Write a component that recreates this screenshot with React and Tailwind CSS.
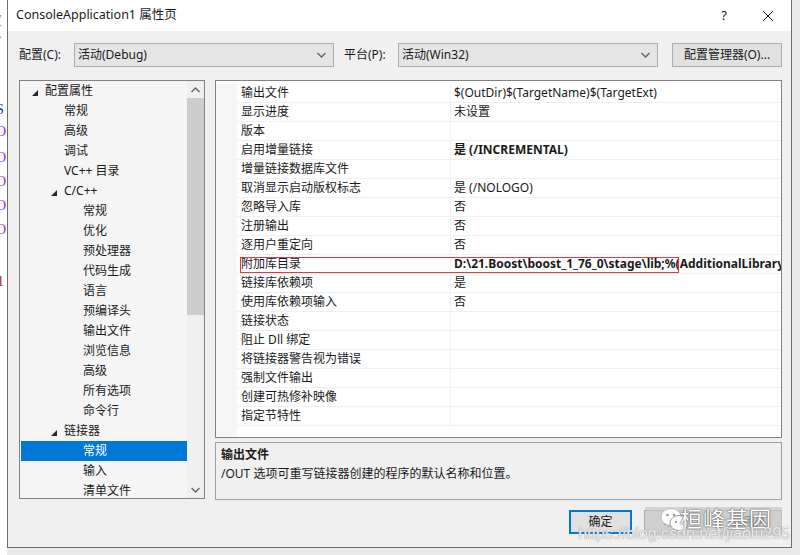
import React from "react";

const font = "font-['Noto_Sans','Noto_Sans_CJK_SC',sans-serif]";

const treeItems = [
  { level: 0, label: "配置属性", open: true },
  { level: 1, label: "常规" },
  { level: 1, label: "高级" },
  { level: 1, label: "调试" },
  { level: 1, label: "VC++ 目录" },
  { level: 1, label: "C/C++", open: true },
  { level: 2, label: "常规" },
  { level: 2, label: "优化" },
  { level: 2, label: "预处理器" },
  { level: 2, label: "代码生成" },
  { level: 2, label: "语言" },
  { level: 2, label: "预编译头" },
  { level: 2, label: "输出文件" },
  { level: 2, label: "浏览信息" },
  { level: 2, label: "高级" },
  { level: 2, label: "所有选项" },
  { level: 2, label: "命令行" },
  { level: 1, label: "链接器", open: true },
  { level: 2, label: "常规", selected: true },
  { level: 2, label: "输入" },
  { level: 2, label: "清单文件" },
];

const props = [
  ["输出文件", "$(OutDir)$(TargetName)$(TargetExt)"],
  ["显示进度", "未设置"],
  ["版本", ""],
  ["启用增量链接", "是 (/INCREMENTAL)", true],
  ["增量链接数据库文件", ""],
  ["取消显示启动版权标志", "是 (/NOLOGO)"],
  ["忽略导入库", "否"],
  ["注册输出", "否"],
  ["逐用户重定向", "否"],
  ["附加库目录", "D:\\21.Boost\\boost_1_76_0\\stage\\lib;%(AdditionalLibraryDirectories)", true, true],
  ["链接库依赖项", "是"],
  ["使用库依赖项输入", "否"],
  ["链接状态", ""],
  ["阻止 Dll 绑定", ""],
  ["将链接器警告视为错误", ""],
  ["强制文件输出", ""],
  ["创建可热修补映像", ""],
  ["指定节特性", ""],
];

const Chevron = ({ up }) => (
  <svg width="9" height="6" viewBox="0 0 9 6" className="shrink-0">
    <polyline
      points={up ? "0.5,5 4.5,1 8.5,5" : "0.5,1 4.5,5 8.5,1"}
      fill="none"
      stroke="#606060"
      strokeWidth="1.3"
    />
  </svg>
);

const Triangle = () => (
  <svg width="6" height="6" viewBox="0 0 6 6" className="mt-[3px]">
    <polygon points="6,0 6,6 0,6" fill="#262626" />
  </svg>
);

const Combo = ({ value }) => (
  <div className="flex h-[24px] w-[260px] items-center justify-between border border-[#adadad] bg-[#e5e5e5] pl-[3px] pr-[7px]">
    <span>{value}</span>
    <Chevron />
  </div>
);

const Button = ({ children, primary, className = "" }) => (
  <div
    className={`flex h-[24px] items-center justify-center bg-[#e1e1e1] ${
      primary ? "border-2 border-[#0078d7]" : "border border-[#adadad]"
    } ${className}`}
  >
    {children}
  </div>
);

export default function App() {
  return (
    <div className={`flex h-[555px] w-[800px] overflow-hidden bg-[#e8e8e8] text-[12px] text-[#1a1a1a] ${font}`}>
      {/* bit of the code editor behind the dialog */}
      <div className="relative h-[555px] w-[7px] shrink-0 overflow-hidden bg-white font-['Liberation_Serif',serif] text-[14px] leading-none">
        <span className="absolute left-[-3px] top-[14px] text-[#a31515]">/</span>
        <span className="absolute left-[-3px] top-[24px] text-[#a31515]">(</span>
        <span className="absolute left-[-4px] top-[103px] text-[#1a1aff]">S</span>
        <span className="absolute left-[-4px] top-[125px] text-[#8a2be2]">O</span>
        <span className="absolute left-[-4px] top-[151px] text-[#8a2be2]">O</span>
        <span className="absolute left-[-4px] top-[175px] text-[#8a2be2]">O</span>
        <span className="absolute left-[-4px] top-[199px] text-[#8a2be2]">O</span>
        <span className="absolute left-[-4px] top-[223px] text-[#8a2be2]">O</span>
        <span className="absolute left-[-3px] top-[275px] text-[#a31515]">1</span>
      </div>

      {/* dialog */}
      <div className="flex h-[548px] w-[785px] min-w-0 shrink-0 flex-col border-x border-b border-[#6e6e6e] bg-[#f0f0f0]">
        <div className="flex h-[31px] shrink-0 items-center bg-white pl-[8px] text-[12.5px]">
          <span>ConsoleApplication1 属性页</span>
          <span className="ml-auto w-[20px] text-center text-[13px]">?</span>
          <svg width="12" height="12" viewBox="0 0 12 12" className="ml-[28px] mr-[17px]">
            <path d="M1 1 L11 11 M11 1 L1 11" stroke="#1a1a1a" strokeWidth="1" />
          </svg>
        </div>

        <div className="flex min-w-0 flex-1 flex-col pl-[11px] pr-[9px]">
          {/* config row */}
          <div className="mt-[11px] flex h-[25px] items-center">
            <span className="w-[55px]">配置(C):</span>
            <Combo value="活动(Debug)" />
            <span className="ml-[10px] w-[54px]">平台(P):</span>
            <Combo value="活动(Win32)" />
            <Button className="ml-auto w-[110px]">配置管理器(O)...</Button>
          </div>

          {/* main area */}
          <div className="mt-[13px] flex min-w-0 gap-[10px]">
            {/* tree */}
            <div className="flex h-[419px] w-[186px] shrink-0 border border-[#828282] bg-[#f5f5f5]">
              <div className="flex-1 overflow-hidden">
                {treeItems.map((it, i) => (
                  <div
                    key={i}
                    className={`relative flex h-[20px] items-center ${
                      it.selected ? "ml-[1px] bg-[#0078d7] text-white" : "text-[#1a1a1a]"
                    }`}
                    style={{ paddingLeft: (it.selected ? 24 : 25) + it.level * 19 }}
                  >
                    {it.open && (
                      <span className="absolute" style={{ left: 13 + it.level * 19 - 1 }}>
                        <Triangle />
                      </span>
                    )}
                    {it.label}
                  </div>
                ))}
              </div>
              <div className="flex w-[17px] shrink-0 flex-col bg-[#f0f0f0]">
                <div className="flex h-[17px] items-center justify-center">
                  <Chevron up />
                </div>
                <div className="h-[217px] bg-[#cdcdcd]" />
                <div className="flex-1" />
                <div className="flex h-[17px] items-center justify-center">
                  <Chevron />
                </div>
              </div>
            </div>

            {/* right side */}
            <div className="flex min-w-0 flex-1 flex-col gap-[4px]">
              <div className="flex h-[358px] flex-col overflow-hidden border border-[#828282] bg-white pt-[3px]">
                {props.map(([name, value, bold, boxed], i) => (
                  <div key={i} className="flex h-[19px] shrink-0">
                    <div className="w-[21px] shrink-0 bg-[#f5f6f8]" />
                    <div className="relative flex min-w-0 flex-1 border-b border-[#f0f0f0]">
                      {boxed && (
                        <div className="absolute left-[3px] top-[2px] h-[16px] w-[439px] border border-[#e03c3c]" />
                      )}
                      <div className="flex w-[214px] shrink-0 items-center border-r border-[#f0f0f0] pl-[4px]">
                        {name}
                      </div>
                      <div className={`flex min-w-0 flex-1 items-center overflow-hidden whitespace-nowrap pl-[3px] ${bold ? "font-bold" : ""}`}>
                        {value}
                      </div>
                    </div>
                  </div>
                ))}
                <div className="flex flex-1">
                  <div className="w-[21px] bg-[#f5f6f8]" />
                </div>
              </div>
              <div className="flex h-[58px] flex-col border border-[#a0a0a0] px-[5px] pt-[2px] leading-[19px]">
                <span className="font-bold">输出文件</span>
                <span>/OUT 选项可重写链接器创建的程序的默认名称和位置。</span>
              </div>
            </div>
          </div>

          {/* buttons */}
          <div className="relative mt-[10px] flex justify-end gap-[12px]">
            <Button primary className="w-[63px]">确定</Button>
            <Button className="w-[63px]">取消</Button>
            <Button className="w-[63px]">应用(A)</Button>

            {/* watermark overlay */}
            <div className="absolute right-0 top-[-3px] h-[29px] w-[137px] bg-[#c8c8c8]/70" />
            <svg width="30" height="28" viewBox="0 0 30 28" className="absolute right-[92px] top-[-4px]">
              <ellipse cx="11" cy="11" rx="10" ry="8.5" fill="white" stroke="#bdbdbd" />
              <ellipse cx="19" cy="17" rx="9" ry="7.5" fill="white" stroke="#9e9e9e" />
              <circle cx="7.5" cy="9" r="1.3" fill="#9e9e9e" />
              <circle cx="14" cy="9" r="1.3" fill="#9e9e9e" />
              <circle cx="16" cy="16" r="1.1" fill="#8a8a8a" />
              <circle cx="22" cy="16" r="1.1" fill="#8a8a8a" />
            </svg>
            <span className="absolute right-[10px] top-[-8px] text-[22px] tracking-[1px] text-white [text-shadow:0_0_2px_#555,0_0_1px_#555]">
              桓峰基因
            </span>
            <span className="absolute right-[-8px] top-[12px] font-['Liberation_Sans',sans-serif] text-[16px] text-white/80 [text-shadow:0_0_1px_#9a9a9a,0_0_1px_#9a9a9a]">
              https://blog.csdn.net/jiaolu295
            </span>
          </div>
        </div>
      </div>
    </div>
  );
}
